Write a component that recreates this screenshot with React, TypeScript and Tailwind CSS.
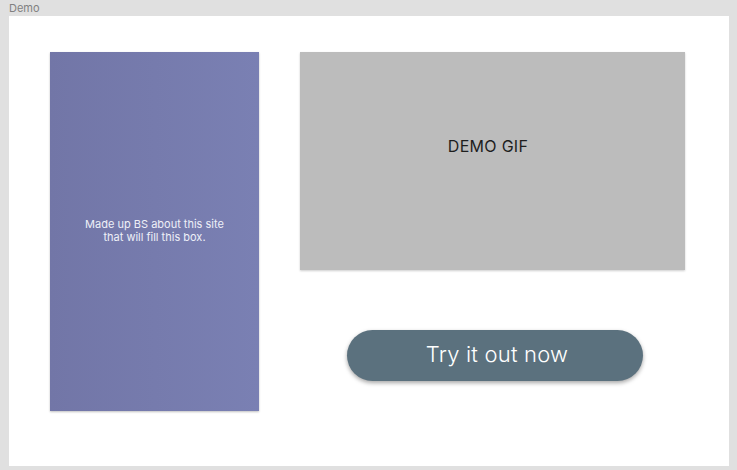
export default function App() {
  return (
    <div
      className="flex h-[470px] w-[737px] flex-col bg-[#e0e0e0] pl-[9px]"
      style={{ fontFamily: "Inter, Lato, sans-serif" }}
    >
      <div className="h-[16px] pt-[1px] text-[11px] leading-[14px] text-[#808080]">
        Demo
      </div>

      <div className="flex h-[450px] w-[720px] gap-[41px] bg-white pl-[41px] pt-[36px]">
        <div className="flex h-[359px] w-[209px] items-center justify-center bg-gradient-to-r from-[#7276a7] to-[#7a80b3] px-4 text-center text-[11px] leading-[13px] text-[#eef0f8] shadow-[0_1px_2px_rgba(0,0,0,0.25)]">
          <p className="pb-[2px]">
            Made up BS about this site
            <br />
            that will fill this box.
          </p>
        </div>

        <div className="flex w-[385px] flex-col">
          <div className="flex h-[218px] justify-center bg-[#bcbcbc] pr-[9px] pt-[84px] text-[16px] leading-[20px] tracking-[0.3px] text-[#1e1e1e] shadow-[0_1px_2px_rgba(0,0,0,0.2)]">
            DEMO GIF
          </div>

          <button className="ml-[47px] mt-[60px] h-[51px] w-[296px] rounded-full bg-[#5b717e] pb-[2px] pl-[4px] text-[22px] font-light tracking-[0.2px] text-white shadow-[0_2px_4px_rgba(0,0,0,0.35)]">
            Try it out now
          </button>
        </div>
      </div>
    </div>
  );
}
